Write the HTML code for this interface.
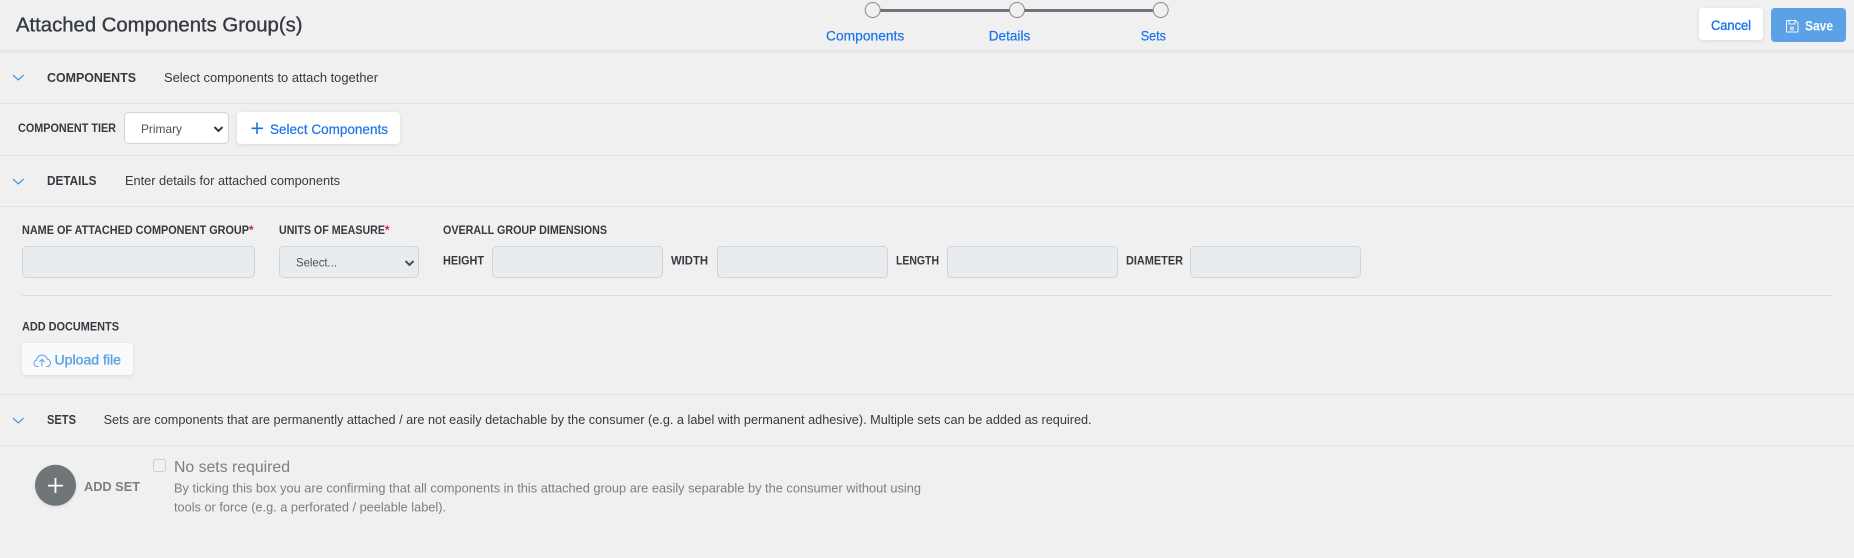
<!DOCTYPE html>
<html><head><meta charset="utf-8"><title>Attached Components Group(s)</title>
<style>
html,body{margin:0;padding:0;background:#f0f0f0;width:1854px;height:558px;overflow:hidden}
svg{display:block}
text{font-family:"Liberation Sans",Arial,sans-serif;fill:#343a40}
.b{font-weight:700}
.blue{fill:#1a73e8}
.lab{font-size:11.5px;font-weight:700}
.sec{font-size:13px;font-weight:700}
.desc{font-size:12.5px}
.gr{fill:#6c757d}
</style></head><body>
<svg width="1854" height="558" viewBox="0 0 1854 558" xmlns="http://www.w3.org/2000/svg">
<defs>
<linearGradient id="hs" x1="0" y1="0" x2="0" y2="1"><stop offset="0" stop-color="#dfe3e8"/><stop offset="1" stop-color="#f0f0f0"/></linearGradient>
<filter id="sh" x="-20%" y="-30%" width="140%" height="170%"><feDropShadow dx="0" dy="1" stdDeviation="1.5" flood-color="#000" flood-opacity=".1"/></filter>
</defs>
<rect width="1854" height="558" fill="#f0f0f0"/>
<rect y="50" width="1854" height="4" fill="url(#hs)"/>

<text x="16" y="31.7" font-size="20" stroke="#343a40" stroke-width=".35" textLength="286.5" lengthAdjust="spacingAndGlyphs">Attached Components Group(s)</text>

<!-- stepper -->
<rect x="872" y="9" width="289" height="3" fill="#6c757d"/>
<g fill="#f0f0f0" stroke="#85898d" stroke-width="1"><circle cx="872.7" cy="10" r="7.5"/><circle cx="1017" cy="10" r="7.5"/><circle cx="1160.7" cy="10" r="7.5"/></g>
<text class="blue" x="826" y="40.7" font-size="14" stroke="#1a73e8" stroke-width=".2" textLength="78.3" lengthAdjust="spacingAndGlyphs">Components</text>
<text class="blue" x="988.7" y="40.7" font-size="14" stroke="#1a73e8" stroke-width=".2" textLength="41.6" lengthAdjust="spacingAndGlyphs">Details</text>
<text class="blue" x="1140.7" y="40.7" font-size="14" stroke="#1a73e8" stroke-width=".2" textLength="25.3" lengthAdjust="spacingAndGlyphs">Sets</text>

<!-- header buttons -->
<rect x="1699" y="8" width="64" height="32" rx="4" fill="#fff" filter="url(#sh)"/>
<text class="blue" x="1711" y="30" font-size="13.5" stroke="#1a73e8" stroke-width=".35" textLength="40" lengthAdjust="spacingAndGlyphs">Cancel</text>
<rect x="1771" y="8" width="75" height="34" rx="4" fill="#5aa2e5"/>
<g fill="none" stroke="#fff" stroke-width="1" stroke-linejoin="round" opacity=".92"><path d="M1786.5 20.5h9l2.5 2.5v9h-11.500z"/><path d="M1789 20.500v3.500h6v-3.500"/><circle cx="1792" cy="28.500" r="1.500"/></g>
<text x="1805" y="30.500" font-size="13.500" class="b" style="fill:#fff" textLength="28" lengthAdjust="spacingAndGlyphs">Save</text>

<!-- components section -->
<path d="M13 75l5.300 5 5.300-5" fill="none" stroke="#1f80e0" stroke-width="1"/>
<text class="sec" x="47" y="82" textLength="89" lengthAdjust="spacingAndGlyphs">COMPONENTS</text>
<text class="desc" x="164" y="82" textLength="214" lengthAdjust="spacingAndGlyphs">Select components to attach together</text>
<rect y="103" width="1854" height="1" fill="#dfe1e5"/>
<text class="lab" x="18" y="132" textLength="98" lengthAdjust="spacingAndGlyphs">COMPONENT TIER</text>
<rect x="124.500" y="112.500" width="104" height="31" rx="4" fill="#fff" stroke="#ced4da"/>
<text x="141" y="133" font-size="12" style="fill:#495057" textLength="41" lengthAdjust="spacingAndGlyphs">Primary</text>
<path d="M214.500 127l4 4 4-4" fill="none" stroke="#343a40" stroke-width="2"/>
<rect x="237" y="112" width="163" height="32" rx="4" fill="#fff" filter="url(#sh)"/>
<path d="M257 122.500v11.500M251.500 128.300h11.500" stroke="#1a73e8" stroke-width="1.600" fill="none"/>
<text class="blue" x="270" y="134" font-size="14" stroke="#1a73e8" stroke-width=".2" textLength="118" lengthAdjust="spacingAndGlyphs">Select Components</text>
<rect y="155" width="1854" height="1" fill="#dfe1e5"/>

<!-- details section -->
<path d="M13 179l5.300 5 5.300-5" fill="none" stroke="#1f80e0" stroke-width="1"/>
<text class="sec" x="47" y="185" textLength="49.500" lengthAdjust="spacingAndGlyphs">DETAILS</text>
<text class="desc" x="125" y="185" textLength="215" lengthAdjust="spacingAndGlyphs">Enter details for attached components</text>
<rect y="206" width="1854" height="1" fill="#dfe1e5"/>

<text class="lab" x="22" y="234" textLength="227" lengthAdjust="spacingAndGlyphs">NAME OF ATTACHED COMPONENT GROUP</text>
<text class="lab" x="249" y="234" style="fill:#dc1450">*</text>
<text class="lab" x="279" y="234" textLength="106" lengthAdjust="spacingAndGlyphs">UNITS OF MEASURE</text>
<text class="lab" x="385" y="234" style="fill:#dc1450">*</text>
<text class="lab" x="443" y="234" textLength="164" lengthAdjust="spacingAndGlyphs">OVERALL GROUP DIMENSIONS</text>

<g fill="#e9ecef" stroke="#ced4da">
<rect x="22.500" y="246.500" width="232" height="31" rx="4"/>
<rect x="279.500" y="246.500" width="139" height="31" rx="4"/>
<rect x="492.500" y="246.500" width="170" height="31" rx="4"/>
<rect x="717.500" y="246.500" width="170" height="31" rx="4"/>
<rect x="947.500" y="246.500" width="170" height="31" rx="4"/>
<rect x="1190.500" y="246.500" width="170" height="31" rx="4"/>
</g>
<text x="296" y="266.700" font-size="12" style="fill:#495057" textLength="41" lengthAdjust="spacingAndGlyphs">Select...</text>
<path d="M405.500 261l4 4 4-4" fill="none" stroke="#495057" stroke-width="2"/>
<text class="lab" x="443" y="264.500" textLength="41" lengthAdjust="spacingAndGlyphs">HEIGHT</text>
<text class="lab" x="671" y="264.500" textLength="37" lengthAdjust="spacingAndGlyphs">WIDTH</text>
<text class="lab" x="896" y="264.500" textLength="43" lengthAdjust="spacingAndGlyphs">LENGTH</text>
<text class="lab" x="1126" y="264.500" textLength="57" lengthAdjust="spacingAndGlyphs">DIAMETER</text>

<rect x="22" y="295" width="1811" height="1" fill="#dcdcdc"/>
<text class="lab" x="22" y="330.700" textLength="97" lengthAdjust="spacingAndGlyphs">ADD DOCUMENTS</text>
<rect x="22" y="343" width="111" height="32" rx="4" fill="#f9fafb" filter="url(#sh)"/>
<g fill="none" stroke="#5aa2e5" stroke-width="1"><path d="M38.500 366.500h-1.500c-1.800 0-3-1.500-3-3.200 0-1.600 1-2.900 2.600-3.200 0.200-2.900 2.600-5.100 5.400-5.100 2.500 0 4.600 1.700 5.200 4 1.800 0.200 3.300 2 3.300 4.100 0 1.800-1.300 3.400-3.300 3.400h-1.200"/><path d="M42 366.500v-7M39.300 362l2.700-2.700 2.700 2.700"/></g>
<text x="54.500" y="364.500" font-size="13.500" style="fill:#5aa2e5" stroke="#5aa2e5" stroke-width=".35" textLength="66.500" lengthAdjust="spacingAndGlyphs">Upload file</text>

<rect y="394" width="1854" height="1" fill="#dfe1e5"/>

<!-- sets -->
<path d="M13 418l5.300 5 5.300-5" fill="none" stroke="#1f80e0" stroke-width="1"/>
<text class="sec" x="47" y="424" textLength="29" lengthAdjust="spacingAndGlyphs">SETS</text>
<text class="desc" x="103.600" y="424" textLength="988" lengthAdjust="spacingAndGlyphs">Sets are components that are permanently attached / are not easily detachable by the consumer (e.g. a label with permanent adhesive). Multiple sets can be added as required.</text>
<rect y="445" width="1854" height="1" fill="#e1e3e8"/>

<circle cx="55.500" cy="485.300" r="20.500" fill="#707478" filter="url(#sh)"/>
<path d="M55.500 478v15M48 485.600h15" stroke="#fff" stroke-width="1.800" fill="none"/>
<text x="84" y="491" font-size="12.500" class="b" style="fill:#7a7f84" textLength="56" lengthAdjust="spacingAndGlyphs">ADD SET</text>
<rect x="153.500" y="459.500" width="12" height="12" rx="2" fill="#f0f0f0" stroke="#cfcfcf"/>
<text x="174" y="472" font-size="16" style="fill:#7a7f84" textLength="116" lengthAdjust="spacingAndGlyphs">No sets required</text>
<text class="desc" x="174" y="492.700" style="fill:#7a7f84" textLength="747" lengthAdjust="spacingAndGlyphs">By ticking this box you are confirming that all components in this attached group are easily separable by the consumer without using</text>
<text class="desc" x="174" y="511.700" style="fill:#7a7f84" textLength="272" lengthAdjust="spacingAndGlyphs">tools or force (e.g. a perforated / peelable label).</text>
</svg>
</body></html>
